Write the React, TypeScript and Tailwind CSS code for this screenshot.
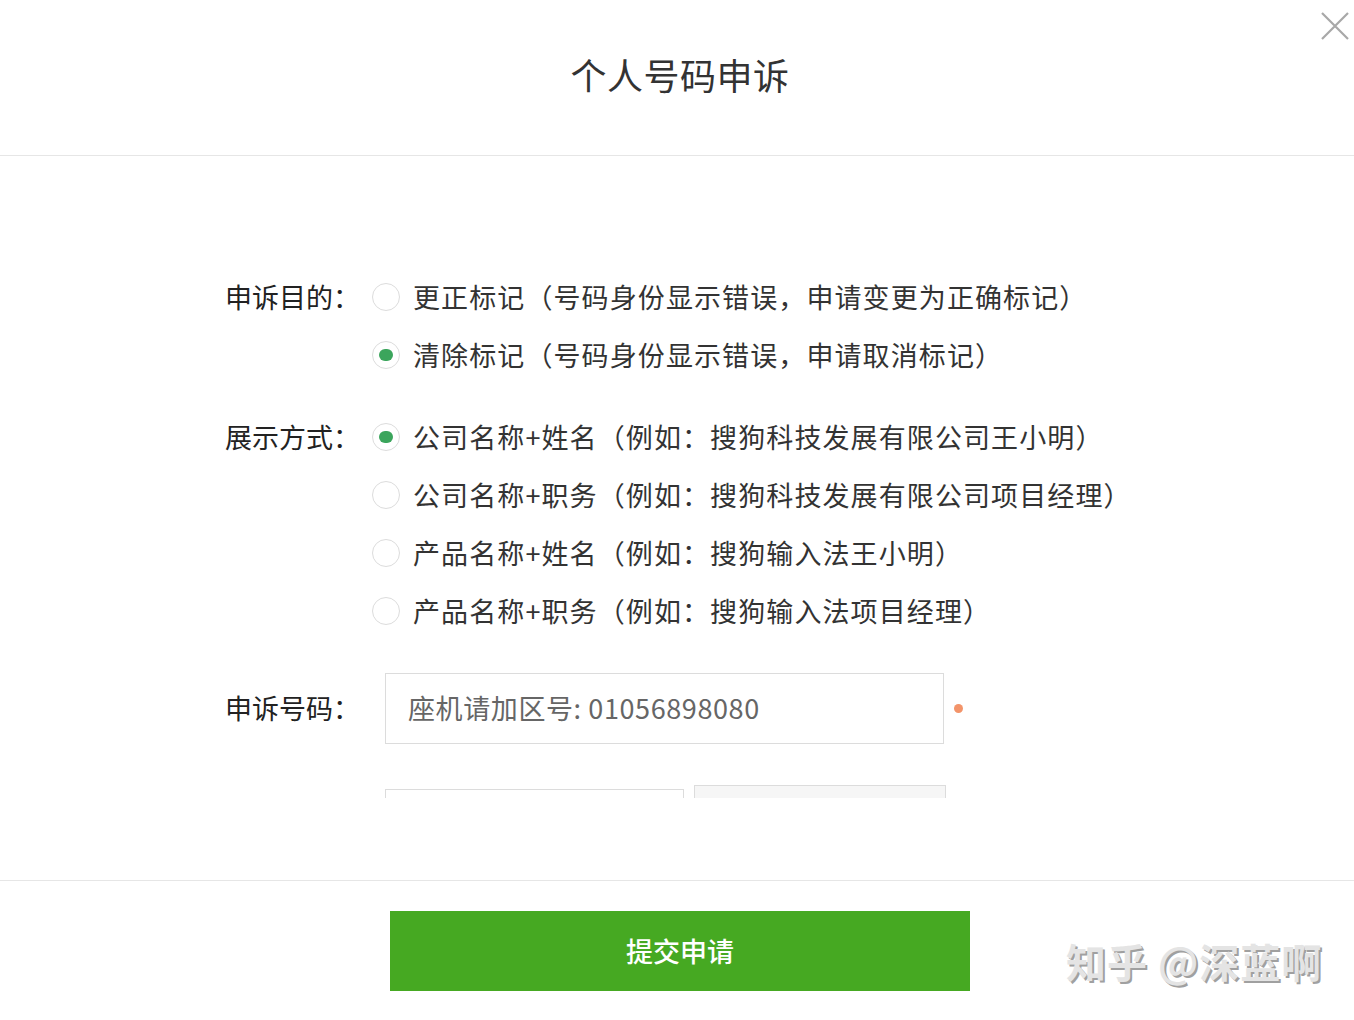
const font = { fontFamily: '"Noto Sans CJK SC", "Noto Sans", sans-serif' };

type Opt = { text: string; checked?: boolean };

const purposes: Opt[] = [
  { text: '更正标记（号码身份显示错误，申请变更为正确标记）' },
  { text: '清除标记（号码身份显示错误，申请取消标记）', checked: true },
];

const displays: Opt[] = [
  { text: '公司名称+姓名（例如：搜狗科技发展有限公司王小明）', checked: true },
  { text: '公司名称+职务（例如：搜狗科技发展有限公司项目经理）' },
  { text: '产品名称+姓名（例如：搜狗输入法王小明）' },
  { text: '产品名称+职务（例如：搜狗输入法项目经理）' },
];

function Radio({ checked }: { checked?: boolean }) {
  return (
    <span className="flex h-[28px] w-[28px] shrink-0 items-center justify-center rounded-full border border-[#dcdcdc] bg-white">
      {checked && <span className="h-[12px] w-[14px] rounded-full bg-[#3ba55c]" />}
    </span>
  );
}

function RadioGroup({ label, options }: { label: string; options: Opt[] }) {
  return (
    <div className="flex">
      <div className="flex h-[58px] w-[147px] shrink-0 items-center text-[27px] text-[#222]">{label}</div>
      <div className="flex flex-col">
        {options.map((o) => (
          <div key={o.text} className="flex h-[58px] items-center gap-[13px]">
            <Radio checked={o.checked} />
            <span className="whitespace-nowrap text-[27px] tracking-[1.1px] text-[#333]">{o.text}</span>
          </div>
        ))}
      </div>
    </div>
  );
}

export default function App() {
  return (
    <div
      className="relative h-[1020px] w-[1354px] overflow-hidden bg-white [text-spacing-trim:space-all]"
      style={font}
    >
      {/* header */}
      <div className="flex h-[156px] items-center justify-center border-b border-[#e6e6e6] pb-[8px]">
        <h1 className="ml-[6px] text-[36px] tracking-[0.5px] text-[#333]">个人号码申诉</h1>
      </div>
      <button className="absolute right-[3px] top-[10px] h-[32px] w-[32px]">
        <svg viewBox="0 0 32 32" className="h-full w-full" stroke="#a8a8a8" strokeWidth="2.2">
          <path d="M3 3 L29 29 M29 3 L3 29" />
        </svg>
      </button>

      <div className="h-[642px] overflow-hidden pl-[225px] pt-[112px]">
        <RadioGroup label="申诉目的：" options={purposes} />
        <div className="mt-[24px]">
          <RadioGroup label="展示方式：" options={displays} />
        </div>
        <div className="mt-[33px] flex items-center">
          <div className="w-[160px] shrink-0 text-[27px] text-[#222]">申诉号码：</div>
          <div className="flex h-[71px] w-[559px] items-center whitespace-nowrap border border-[#dcdcdc] px-[22px] text-[27px] tracking-[0.6px] text-[#666]">
            座机请加区号: 01056898080
          </div>
          <span className="ml-[10px] h-[9px] w-[9px] rounded-full bg-[#f3946a]" />
        </div>
        <div className="ml-[160px] mt-[41px] flex items-start gap-[10px]">
          <div className="mt-[4px] h-[60px] w-[299px] border border-[#dcdcdc]" />
          <div className="h-[60px] w-[252px] border border-[#dcdcdc] bg-[#f6f6f6]" />
        </div>
      </div>

      {/* footer */}
      <div className="mt-[82px] border-t border-[#e6e6e6] pt-[30px]">
        <button className="ml-[390px] flex h-[80px] w-[580px] items-center justify-center bg-[#46a922] text-[27px] font-medium text-white">
          提交申请
        </button>
      </div>

      <div
        className="absolute left-[1066px] top-[931px] text-[40px] font-bold tracking-[1px] text-[#e4e4e4]"
        style={{ textShadow: '2px 2px 0 #a0a0a0' }}
      >
        知乎 @深蓝啊
      </div>
    </div>
  );
}
